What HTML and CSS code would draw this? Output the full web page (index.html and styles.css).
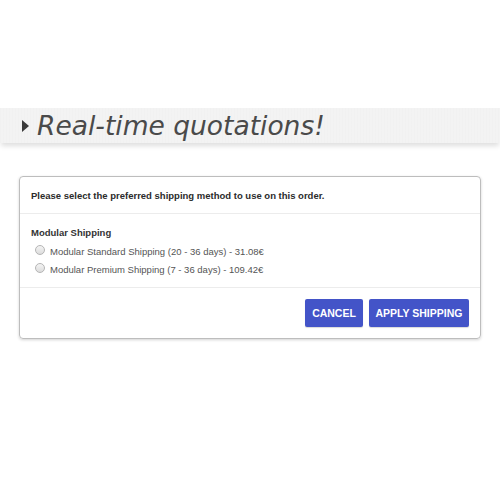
FILE: index.html
```html
<!DOCTYPE html>
<html>
<head>
<meta charset="utf-8">
<link rel="stylesheet" href="styles.css">
</head>
<body>
<div class="page">
  <div class="banner">
    <span class="tri"></span>
    <span class="title">Real-time quotations!</span>
  </div>
  <div class="dialog">
    <div class="head">Please select the preferred shipping method to use on this order.</div>
    <div class="body">
      <div class="group">Modular Shipping</div>
      <label class="opt"><span class="radio"></span>Modular Standard Shipping (20 - 36 days) - 31.08€</label>
      <label class="opt"><span class="radio"></span>Modular Premium Shipping (7 - 36 days) - 109.42€</label>
    </div>
    <div class="foot">
      <button class="btn btn-cancel">CANCEL</button>
      <button class="btn btn-apply">APPLY SHIPPING</button>
    </div>
  </div>
</div>
</body>
</html>
```
FILE: styles.css
```css
html, body {
  margin: 0;
  padding: 0;
  background: #ffffff;
}
.page {
  width: 500px;
  height: 500px;
  padding-top: 108px;
  box-sizing: border-box;
}
.banner {
  height: 35px;
  background-color: #f3f3f3;
  background-image: repeating-linear-gradient(90deg, rgba(0,0,0,0.008) 0 1px, rgba(255,255,255,0) 1px 3px);
  box-shadow: 0 4px 5px -1px rgba(0,0,0,0.13);
  display: flex;
  align-items: center;
  padding-left: 22px;
}
.tri {
  width: 0;
  height: 0;
  border-top: 6px solid transparent;
  border-bottom: 6px solid transparent;
  border-left: 7px solid #3a3a3a;
  margin-right: 8px;
  margin-top: 1px;
}
.title {
  font-family: "DejaVu Sans", sans-serif;
  font-style: italic;
  font-size: 26.5px;
  color: #4a4a4a;
}
.dialog {
  margin: 33px 0 0 19px;
  width: 462px;
  height: 163px;
  box-sizing: border-box;
  border: 1px solid #bdbdbd;
  border-radius: 4px;
  box-shadow: 0 1px 3px rgba(0,0,0,0.18);
  display: flex;
  flex-direction: column;
  font-family: "Liberation Sans", Arial, sans-serif;
}
.head {
  height: 37px;
  box-sizing: border-box;
  padding: 0 0 0 11px;
  display: flex;
  align-items: center;
  font-weight: bold;
  font-size: 9.5px;
  color: #2b2b2b;
  border-bottom: 1px solid #ececec;
}
.body {
  height: 74px;
  box-sizing: border-box;
  padding: 13px 0 0 11px;
  border-bottom: 1px solid #ececec;
}
.group {
  font-weight: bold;
  font-size: 9.5px;
  color: #333;
  margin-bottom: 4px;
}
.opt {
  display: flex;
  align-items: center;
  font-size: 9.5px;
  color: #555;
  height: 18px;
  padding-left: 4px;
}
.radio {
  width: 8px;
  height: 8px;
  border-radius: 50%;
  border: 1px solid #b5b5b5;
  background: linear-gradient(#f4f4f4, #dcdcdc);
  margin-right: 5px;
  margin-top: -2px;
}
.foot {
  flex: 1;
  display: flex;
  justify-content: flex-end;
  align-items: flex-start;
  padding: 11px 11px 0 0;
  gap: 6px;
}
.btn {
  background: #4354c8;
  color: #fff;
  border: none;
  border-radius: 2px;
  height: 28px;
  font-family: "Liberation Sans", Arial, sans-serif;
  font-weight: bold;
  font-size: 10.5px;
  padding: 0;
  box-shadow: 0 1px 1px rgba(0,0,0,0.15);
}
.btn-cancel { width: 58px; }
.btn-apply { width: 100px; }
```
